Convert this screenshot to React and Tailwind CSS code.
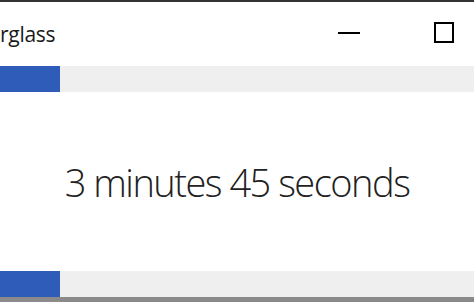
const Bar = ({ pct }) => (
    <div className="h-[26px] bg-[#efefef] flex">
        <div className="bg-[#2e5cb8] h-full" style={{ width: `${pct}%` }}></div>
    </div>
);

export default function App() {
    const progress = 12.6;

    return (
        <div className="w-[474px] h-[302px] flex flex-col bg-white overflow-hidden font-['Open_Sans',sans-serif]">
            <div className="h-[2px] bg-[#333333]"></div>
            {/* title bar */}
            <div className="h-[64px] flex items-center">
                <span className="text-[21px] text-[#1a1a1a] leading-none tracking-[-0.3px]">rglass</span>
                <div className="ml-auto flex items-center h-full">
                    <div className="w-[22px] h-[2px] bg-black mr-[74px] -mt-[3px]"></div>
                    <div className="w-[20px] h-[21px] border-2 border-black mr-[20px] -mt-[3px]"></div>
                </div>
            </div>

            <Bar pct={progress} />

            <div className="flex-1 flex items-center justify-center">
                <span className="text-[38px] font-light text-[#222222] leading-none tracking-[-1.5px]">3 minutes 45 seconds</span>
            </div>

            <Bar pct={progress} />
            <div className="h-[5px] bg-[#8a8a8a]"></div>
        </div>
    );
}
